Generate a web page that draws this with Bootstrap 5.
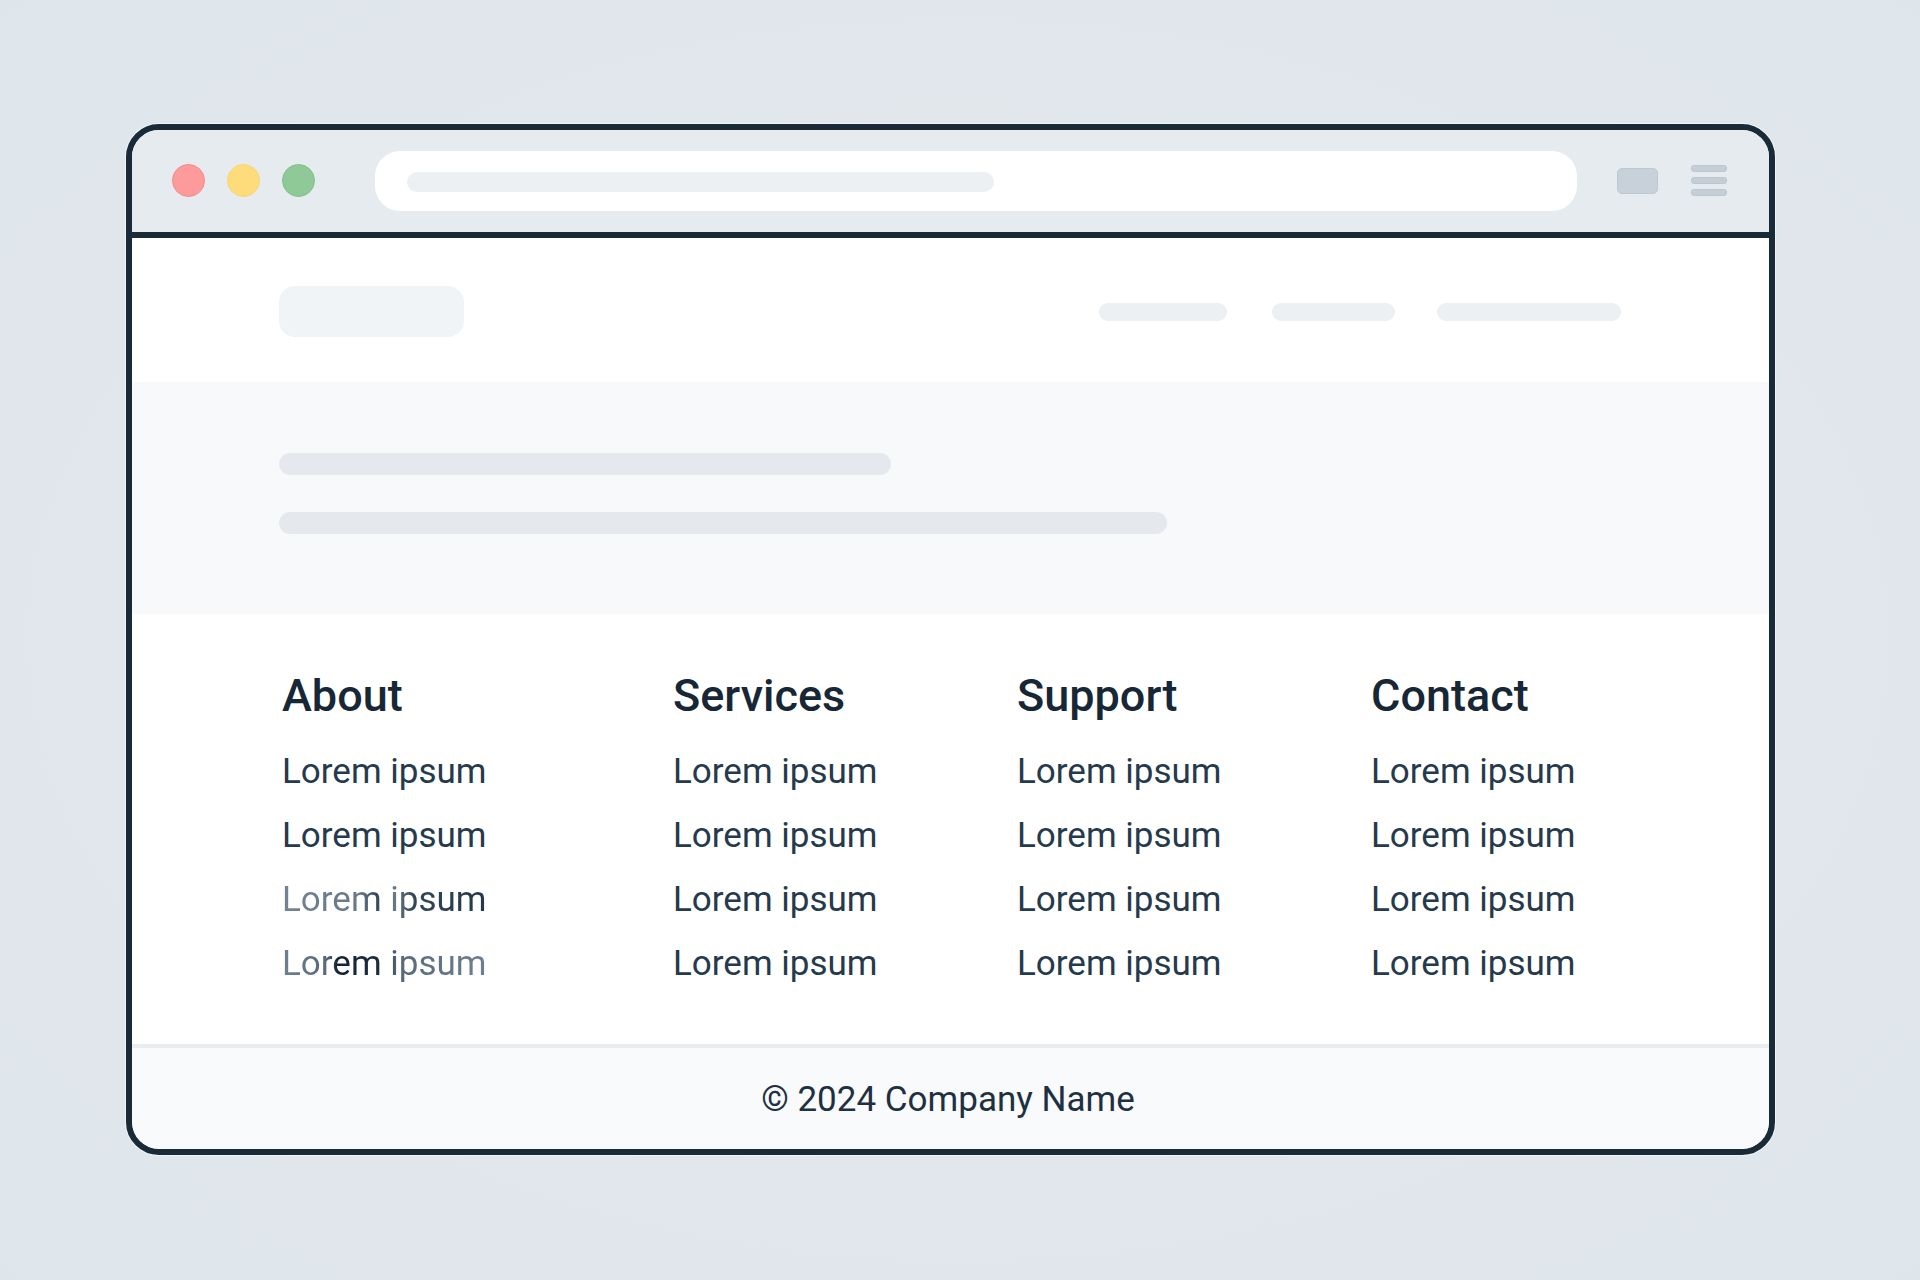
<!DOCTYPE html>
<html lang="en">
<head>
<meta charset="utf-8">
<meta name="viewport" content="width=device-width, initial-scale=1">
<title>Company Name</title>
<link href="https://cdn.jsdelivr.net/npm/bootstrap@5.3.0/dist/css/bootstrap.min.css" rel="stylesheet">
<style>
  :root { --ink: #253a4d; --dark-line: #192a38; }
  body {
    font-family: Roboto, "Liberation Sans", sans-serif;
    color: var(--ink);
    background: radial-gradient(ellipse at center, #e2e8ec 40%, #dfe6eb 100%);
    padding: 124px 145px 125px 126px;
  }
  .browser {
    border: 6px solid var(--dark-line);
    border-radius: 33px;
    box-shadow: 0 0 0 1px #f1f4f7;
  }
  .toolbar {
    height: 108px;
    padding: 0 42px 1px 40px;
    background: #e6ebef;
    border-bottom: 6px solid var(--dark-line);
  }
  .dots { gap: 22px; margin-right: 60px; }
  .dot { width: 33px; height: 33px; border: 1px solid; }
  .dot-red { background: #fd9a9b; border-color: #fa8688; }
  .dot-yellow { background: #fedc7c; border-color: #fbd468; }
  .dot-green { background: #8fc997; border-color: #7fbf89; }
  .address input { height: 60px; border-radius: 25px; padding: 0 32px; }
  .address .skeleton { left: 32px; top: 21px; width: 48.8%; height: 20px; background: #ecf0f3; }
  .tool-tab { width: 41px; height: 26px; margin-left: 40px; border-radius: 5px; background: #c8d0d9; border: 1px solid #bec8d1; }
  .tool-menu { width: 36px; margin-left: 33px; gap: 5px; }
  .tool-menu span { height: 7px; border-radius: 3px; background: #c5ced7; border: 1px solid #bdc7d0; }
  .skeleton { display: block; border-radius: 12px; }
  .site-head { height: 144px; padding: 3px 148px 0 147px; }
  .brand { width: 185px; height: 51px; border-radius: 16px; background: #f1f4f7; }
  .head-link { height: 18px; background: #ecf0f3; }
  .hero { height: 232px; padding: 0 147px 10px; gap: 37px; background: #f8f9fb; }
  .hero .skeleton { height: 22px; background: #e5e9ed; }
  .link-grid {
    display: grid;
    grid-template-columns: 391fr 344fr 354fr 250fr;
    padding: 55px 148px 48px 150px;
  }
  .link-grid h2 { font-size: 45px; line-height: 54px; font-weight: 500; margin-bottom: 17px; color: #172736; }
  .link-grid li, .copyright { font-size: 35px; line-height: 64px; }
  .link-grid a { color: var(--ink); text-decoration: none; }
  .link-grid .fade-start, .link-grid .fade-ends { color: transparent; -webkit-background-clip: text; background-clip: text; }
  .link-grid .fade-start { background-image: linear-gradient(90deg, #748393 0, #687888 38%, #34475a 46%, #687888 55%, #34475a 64%, #23374a 100%); }
  .link-grid .fade-ends { background-image: linear-gradient(90deg, #708093 0, #57687a 22%, #142434 27%, #1b2c3d 50%, #57687a 56%, #708093 100%); }
  .copyright { padding: 20px 5px 17px 0; background: #f9fafb; border-top: 4px solid #e9edf0; border-radius: 0 0 27px 27px; color: #1e3042; }
</style>
<script src="https://cdn.jsdelivr.net/npm/bootstrap@5.3.0/dist/js/bootstrap.bundle.min.js" defer></script>
</head>
<body class="min-vh-100">
<div class="browser bg-white overflow-hidden">
  <div class="toolbar d-flex align-items-center">
    <div class="dots d-flex">
      <button type="button" class="dot dot-red rounded-circle p-0" aria-label="Close"></button>
      <button type="button" class="dot dot-yellow rounded-circle p-0" aria-label="Minimize"></button>
      <button type="button" class="dot dot-green rounded-circle p-0" aria-label="Maximize"></button>
    </div>
    <div class="address flex-grow-1 position-relative">
      <input type="text" class="form-control border-0 bg-white" aria-label="Address">
      <span class="skeleton position-absolute pe-none"></span>
    </div>
    <button type="button" class="tool-tab p-0" aria-label="Tabs"></button>
    <button type="button" class="tool-menu d-flex flex-column p-0 border-0 bg-transparent" aria-label="Menu">
      <span class="w-100"></span><span class="w-100"></span><span class="w-100"></span>
    </button>
  </div>

  <header class="site-head d-flex align-items-center justify-content-between">
    <a href="#" class="brand" aria-label="Home"></a>
    <nav class="d-flex" aria-label="Main">
      <a href="#" class="skeleton head-link" style="width:128px;margin-right:45px" aria-label="First page"></a>
      <a href="#" class="skeleton head-link" style="width:123px;margin-right:42px" aria-label="Second page"></a>
      <a href="#" class="skeleton head-link" style="width:184px" aria-label="Third page"></a>
    </nav>
  </header>

  <section class="hero d-flex flex-column justify-content-center">
    <span class="skeleton" style="width:45.6%"></span>
    <span class="skeleton" style="width:66.1%"></span>
  </section>

  <footer>
    <div class="link-grid">
      <section>
        <h2>About</h2>
        <ul class="list-unstyled mb-0">
          <li><a href="#">Lorem ipsum</a></li>
          <li><a href="#">Lorem ipsum</a></li>
          <li><a href="#" class="fade-start">Lorem ipsum</a></li>
          <li><a href="#" class="fade-ends">Lorem ipsum</a></li>
        </ul>
      </section>
      <section>
        <h2>Services</h2>
        <ul class="list-unstyled mb-0">
          <li><a href="#">Lorem ipsum</a></li>
          <li><a href="#">Lorem ipsum</a></li>
          <li><a href="#">Lorem ipsum</a></li>
          <li><a href="#">Lorem ipsum</a></li>
        </ul>
      </section>
      <section>
        <h2>Support</h2>
        <ul class="list-unstyled mb-0">
          <li><a href="#">Lorem ipsum</a></li>
          <li><a href="#">Lorem ipsum</a></li>
          <li><a href="#">Lorem ipsum</a></li>
          <li><a href="#">Lorem ipsum</a></li>
        </ul>
      </section>
      <section>
        <h2>Contact</h2>
        <ul class="list-unstyled mb-0">
          <li><a href="#">Lorem ipsum</a></li>
          <li><a href="#">Lorem ipsum</a></li>
          <li><a href="#">Lorem ipsum</a></li>
          <li><a href="#">Lorem ipsum</a></li>
        </ul>
      </section>
    </div>
    <p class="copyright text-center mb-0">© 2024 Company Name</p>
  </footer>
</div>
</body>
</html>
